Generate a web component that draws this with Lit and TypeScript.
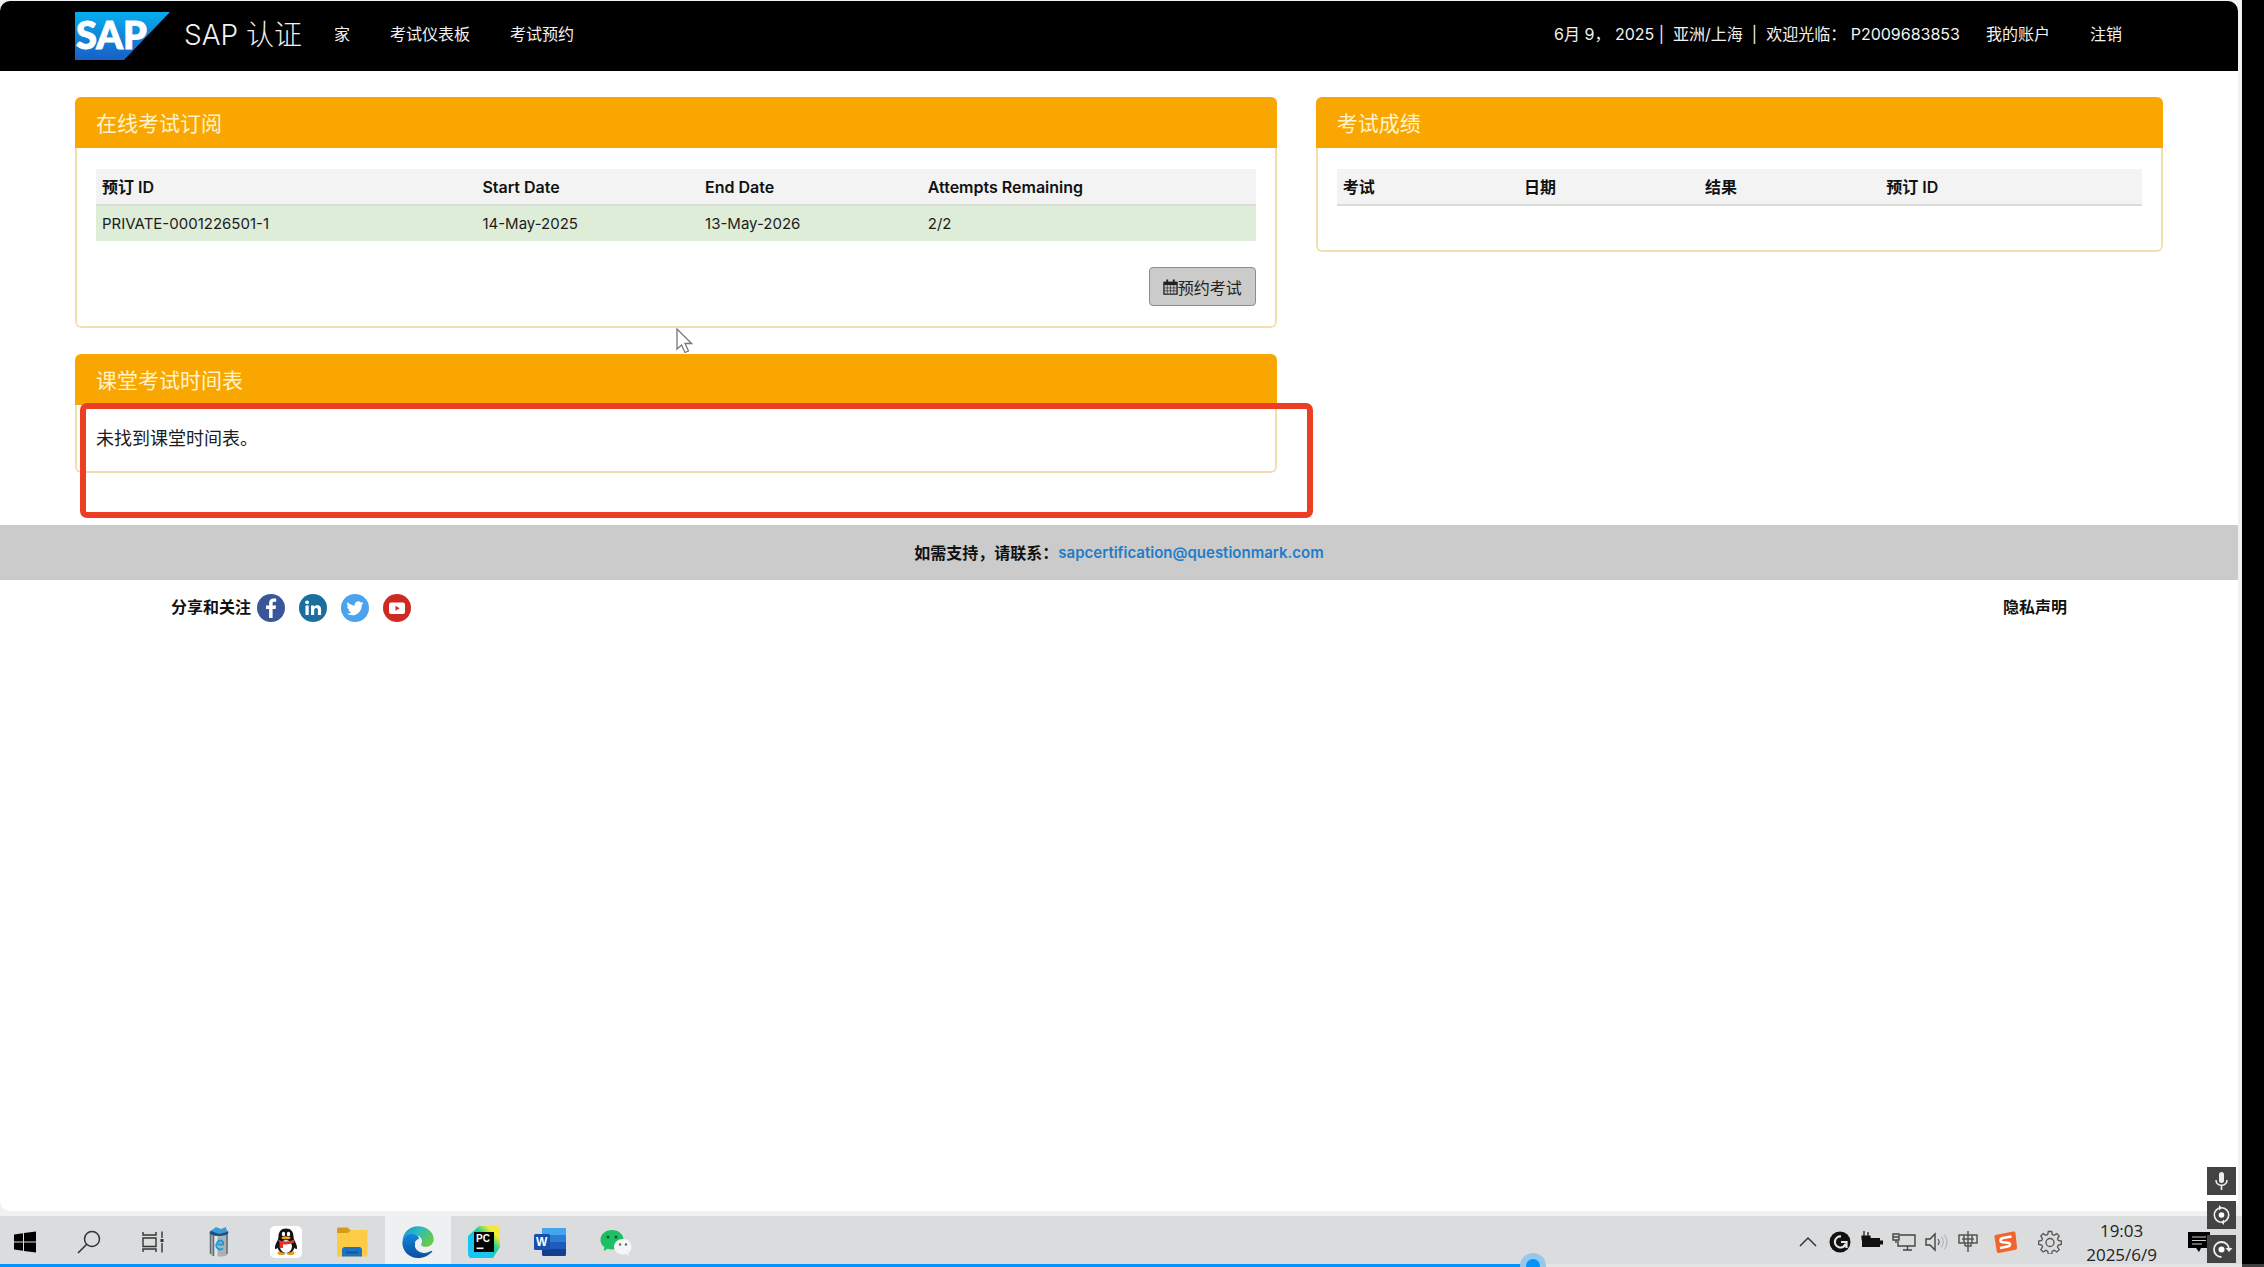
import { LitElement, html, css, svg } from "lit";
import { customElement } from "lit/decorators.js";

const logo = html`<svg class="logo" viewBox="0 0 95 48" role="img" aria-label="SAP">
  <defs><linearGradient id="sapg" x1="0" y1="0" x2="0" y2="1"><stop offset="0" stop-color="#06aeee" /><stop offset="1" stop-color="#1a5fc4" /></linearGradient></defs>
  <path d="M0 0H95L49 48H0Z" fill="url(#sapg)" />
  <text class="logo-text" x="1" y="37">SAP</text>
</svg>`;

const calendar = html`<svg class="cal" viewBox="0 0 16 16" aria-hidden="true">
  <path d="M1 3h14v12.5H1z" fill="none" stroke="#222" stroke-width="1.4" />
  <path d="M1 2.5h14V6H1z" fill="#222" />
  <path d="M4.5 0v4M11.5 0v4" stroke="#222" stroke-width="2" />
  <path d="M4.5 6v9M8 6v9M11.5 6v9M1 9h14M1 12h14" stroke="#333" stroke-width=".8" />
</svg>`;

const socials = [
  { name: "Facebook", color: "#3a569b", mark: svg`<path d="M15.6 24v-9h3l.5-3.500h-3.500V9.400c0-1 .4-1.700 1.800-1.700h1.800V4.600c-.4 0-1.400-.2-2.600-.2-2.800 0-4.500 1.600-4.500 4.600v2.500H9V15h3.100v9z" fill="#fff"/>` },
  { name: "LinkedIn", color: "#1b6f9f", mark: svg`<path d="M6.500 11.500h3.200V21H6.500zM12 11.500h3v1.400c.6-1 1.700-1.700 3.200-1.700 3 0 3.900 1.900 3.900 4.700V21h-3.200v-4.700c0-1.400-.3-2.400-1.700-2.400s-2 1-2 2.400V21H12z" fill="#fff"/><circle cx="8.100" cy="8.300" r="1.900" fill="#fff"/>` },
  { name: "Twitter", color: "#4ba3ee", mark: svg`<path d="M22.500 9c-.6.300-1.300.5-2 .6.7-.4 1.300-1.100 1.500-1.900-.7.400-1.400.7-2.200.8a3.500 3.500 0 0 0-6 3.200c-2.900-.1-5.400-1.500-7.200-3.600-1 1.700-.4 3.600 1.100 4.600-.6 0-1.100-.2-1.600-.4 0 1.700 1.200 3.100 2.800 3.400-.5.100-1 .2-1.500.1.400 1.400 1.700 2.400 3.200 2.400A7 7 0 0 1 5.500 19.600c8 4.600 15.400-.8 15.300-8.900.7-.4 1.300-1 1.700-1.700z" fill="#fff"/>` },
  { name: "YouTube", color: "#cf2a22", mark: svg`<rect x="6" y="8.500" width="16" height="11.500" rx="2" fill="#fff"/><path d="M12.500 11.800v5l4.200-2.500z" fill="#cf2a22"/>` },
];

const apps = [
  { name: "开始", art: svg`<path d="M5 8.600l9-1.300v8.200H5zM15 7.100L27 5.500v10H15zM5 16.500h9v8.200l-9-1.300zM15 16.500h12v10l-12-1.600z" fill="#000"/>` },
  { name: "搜索", art: svg`<circle cx="19" cy="13" r="7.500" fill="none" stroke="#333" stroke-width="1.500"/><path d="M13.500 18.500L5 27" stroke="#333" stroke-width="1.600"/>` },
  { name: "任务视图", art: svg`<path d="M6 6v3h13V6M6 26v-3h13v3M6 12h13v8.500H6zM25 5.500V12M25 17v9.500" fill="none" stroke="#333" stroke-width="1.400"/><path d="M23.500 13h3v3h-3z" fill="#333"/>` },
  { name: "垃圾清理", art: svg`<path d="M7 7h18l-1 22c0 2-16 2-16 0z" fill="#aab2b8"/><path d="M7.500 7v21M10.500 9v21M24 8v20" stroke="#5f6d76" stroke-width="1.500"/><path d="M13 9v22" stroke="#dfe5e8" stroke-width="3"/><ellipse cx="16" cy="6.500" rx="9.500" ry="3.500" fill="#1e4f7c"/><path d="M8 5l5-4 5 2 5-2 1 5-8 2z" fill="#3d9bd9"/><path d="M20 22.500c-5 3-8-2-6-5.500 2-4 7-2.500 6 1.500h-5" fill="none" stroke="#199cd8" stroke-width="2"/>` },
  { name: "QQ", art: svg`<rect width="32" height="32" rx="5" fill="#fff"/><ellipse cx="11.500" cy="27" rx="4" ry="2" fill="#e79a22"/><ellipse cx="20.500" cy="27" rx="4" ry="2" fill="#e79a22"/><path d="M16 2.500c-5 0-7.500 3.500-7.500 8 0 4-3.500 7-3.500 11 0 2 1 2 2.500 0 1 4 4 5.500 8.500 5.500s7.500-1.500 8.500-5.500c1.500 2 2.500 2 2.500 0 0-4-3.500-7-3.500-11 0-4.500-2.500-8-7.500-8z" fill="#111"/><ellipse cx="16" cy="20.500" rx="6" ry="6.500" fill="#fff"/><ellipse cx="13.500" cy="8" rx="1.700" ry="2.300" fill="#fff"/><ellipse cx="18.500" cy="8" rx="1.700" ry="2.300" fill="#fff"/><ellipse cx="16" cy="11.700" rx="4.500" ry="1.500" fill="#f1a21c"/><path d="M8 13.500c5 2.500 11 2.500 16 0v3c-4 2-8 2.300-11 1.700V22h-3.500v-5.500z" fill="#e33125"/>` },
  { name: "文件资源管理器", art: svg`<path d="M1 3c0-1 .5-1.500 1.500-1.500h9L14 4H31v4H1z" fill="#d79a17"/><path d="M1 7h11l3-3h15c1 0 1.500.5 1.500 1.500V29c0 1-.5 1.500-1.500 1.500H2.500C1.500 30.500 1 30 1 29z" fill="#fdcb45"/><path d="M6 30.500V24c0-2 1-3 3-3h14c2 0 3 1 3 3v6.500z" fill="#1c73c4"/><path d="M10 25.500h12v2H10z" fill="#125496"/>` },
  { name: "Edge", active: true, art: svg`<defs><linearGradient id="e1" x1="0" y1="0" x2="1" y2=".5"><stop offset="0" stop-color="#1593d8"/><stop offset=".55" stop-color="#32bdb9"/><stop offset="1" stop-color="#65c94b"/></linearGradient><linearGradient id="e2" x1="0" y1="0" x2="0" y2="1"><stop offset="0" stop-color="#1388dc"/><stop offset="1" stop-color="#0e4d9e"/></linearGradient></defs><path d="M.5 15C1 6 8 .3 16 .3c9 0 15.700 6 15.700 13 0 5-4 7.500-8 7.500-3 0-5.700-1-4.200-3.200C22 13 17 8.500 11.500 9 6 9.400 2 12 .5 15z" fill="url(#e1)"/><path d="M.4 16C2 8.500 8 7.500 11 8c4 .5 6 2.500 6 5-3 .5-5 3.500-4.500 7 .7 5 6 8 11.500 7.500 2 0 4-1 6-2C27 29.500 22 32 16 32 7 32 0 25 .4 16z" fill="url(#e2)"/><path d="M12.500 17c-2 6 4 11.500 10.500 10.700 2.500-.2 5-1.200 7-2.400" fill="none" stroke="#145fb2" stroke-width="1.500"/>` },
  { name: "PyCharm", art: svg`<defs><linearGradient id="p1" x1="0" y1="1" x2="1" y2="0"><stop offset=".35" stop-color="#16c5f2"/><stop offset=".6" stop-color="#27cf8d"/><stop offset=".8" stop-color="#f3ea38"/></linearGradient></defs><path d="M0 10L11 0h21v21l-7 11H2L0 29z" fill="url(#p1)"/><rect x="6" y="6" width="20" height="20" fill="#000"/><text class="pc" x="8" y="16">PC</text><path d="M8.500 21.500h7v1.600h-7z" fill="#fff"/>` },
  { name: "Word", art: svg`<rect x="8" y="2" width="24" height="28" rx="2" fill="#1d5cbb"/><path d="M10 2h20c1.500 0 2 .7 2 2v5H8V4c0-1.300.7-2 2-2z" fill="#42a5ee"/><path d="M8 9h24v7H8z" fill="#2b7cd4"/><path d="M8 23h24v5c0 1.500-.7 2-2 2H10c-1.500 0-2-.7-2-2z" fill="#12408f"/><rect x="0" y="8" width="16" height="16" rx="1.500" fill="#1750ad"/><text class="wd" x="2" y="20">W</text>` },
  { name: "微信", art: svg`<path d="M12 4C5 4 .5 8.500.5 14c0 3 1.500 5.500 4 7.300L3.500 25l4.200-2.200c1.400.4 2.800.6 4.300.6 7 0 11.500-4.400 11.500-9.600S19 4 12 4z" fill="#1cbf62"/><circle cx="8" cy="11" r="1.500" fill="#0d5d31"/><circle cx="16" cy="11" r="1.500" fill="#0d5d31"/><path d="M23 13c-5 0-9 3.500-9 7.800s4 7.700 9 7.700c1 0 2-.1 2.900-.4l3.100 1.700-.7-2.900c2-1.400 3.200-3.600 3.200-6.100 0-4.300-3.500-7.800-8.500-7.800z" fill="#f4f6f5"/><circle cx="20" cy="18.500" r="1.200" fill="#666"/><circle cx="26" cy="18.500" r="1.200" fill="#666"/>` },
];

const tray = [
  { name: "显示隐藏的图标", art: svg`<path d="M4 16l8-8 8 8" fill="none" stroke="#333" stroke-width="1.500"/>` },
  { name: "Logitech G", art: svg`<circle cx="12" cy="12" r="10.500" fill="#111"/><path d="M13 6.500a5.500 5.500 0 1 0 4.500 7.500M13 12h5.500v6" fill="none" stroke="#e6e6e6" stroke-width="2.200"/>` },
  { name: "电池", art: svg`<path d="M2 8h18v2.500h3v4h-3V17H2z" fill="#111"/><path d="M4 1v5M8 2v4M2 6h8v2c0 3-2 4-4 4s-4-1-4-4z" fill="#111" stroke="#111" stroke-width="1.200"/>` },
  { name: "网络", art: svg`<path d="M8 5h15v11H6v-5M11 20h9M15.500 16v4M1 4h6v6H1zM4 10v3M1 7h6" fill="none" stroke="#444" stroke-width="1.400"/>` },
  { name: "音量", art: svg`<path d="M2 9h4l5-5v16l-5-5H2z" fill="none" stroke="#444" stroke-width="1.400"/><path d="M14 9c1.500 2 1.500 4 0 6" fill="none" stroke="#555" stroke-width="1.200"/><path d="M17 6.500c3 3.500 3 7.500 0 11M20 4.500c4 4.500 4 10.500 0 15" fill="none" stroke="#aaa" stroke-width="1"/>` },
  { name: "输入法", art: svg`<path d="M3 5h18v8H3zM8 5v8M16 5v8M12 1v21M6 9h12M9 16h6v-3M9 13v3" fill="none" stroke="#555" stroke-width="1.500"/>` },
];

const sogou = html`<svg class="i24" viewBox="0 0 24 24" role="img" aria-label="搜狗输入法"><path d="M1.500 5L19 1.500c1.500-.3 2.300.4 2.500 1.500L23 17.500c.1 1.300-.5 2-1.500 2.200L5 23c-1.300.2-2-.4-2.200-1.500L.5 7C.3 6 .7 5.200 1.500 5z" fill="#f0652b"/><path d="M17.500 6.500L9 8c-3 .6-3.500 3.600-.5 4.200l5.500.6c3 .6 2.500 3.200-.5 3.800L6 18" fill="none" stroke="#fff" stroke-width="2.600"/></svg>`;
const gear = html`<svg class="i24" viewBox="0 0 24 24" role="img" aria-label="设置"><path d="M10.300 1.500h3.400l.6 3 1.900.8 2.600-1.700 2.400 2.400-1.700 2.600.8 1.900 3 .6v3.400l-3 .6-.8 1.900 1.700 2.600-2.400 2.400-2.600-1.700-1.900.8-.6 3h-3.400l-.6-3-1.900-.8L5.200 22l-2.400-2.400L4.500 17l-.8-1.900-3-.6v-3.400l3-.6.8-1.900L2.800 6l2.400-2.400 2.600 1.700 1.900-.8z" fill="none" stroke="#555" stroke-width="1.300"/><circle cx="12" cy="12.500" r="4" fill="none" stroke="#555" stroke-width="1.300"/></svg>`;
const notice = html`<svg class="i24" viewBox="0 0 24 24" role="img" aria-label="通知"><path d="M1 2h22v16h-9l-2 4-3-4H1z" fill="#000"/><path d="M5 7h14M5 10.500h14M5 14h10" stroke="#ccc" stroke-width="1.200"/></svg>`;

const tools = [
  { name: "麦克风", art: svg`<rect x="12" y="5" width="5" height="11" rx="2.500" fill="#eee"/><path d="M9 13c0 7 11 7 11 0M14.500 18.500V23" fill="none" stroke="#eee" stroke-width="1.600"/>` },
  { name: "录制", art: svg`<circle cx="14.500" cy="14" r="2.800" fill="#fff"/><circle cx="14.500" cy="14" r="7.200" fill="none" stroke="#eee" stroke-width="1.600"/><path d="M12 4l3 2.800-3 2.700zM17 24l-3-2.800 3-2.700z" fill="#eee"/>` },
  { name: "旋转", art: svg`<circle cx="14.500" cy="14.500" r="3" fill="#fff"/><path d="M14.500 22A7.500 7.500 0 1 1 22 14.500" fill="none" stroke="#eee" stroke-width="1.800"/><path d="M18.500 13h7L22 17z" fill="#eee"/>` },
];

@customElement("app-root")
export class AppRoot extends LitElement {
  static styles = css`
    :host { display: block; font-family: Inter, "Noto Sans CJK SC", sans-serif; font-size: 15px; line-height: 24px; color: #1c1c1c; }
    * { box-sizing: border-box; }
    a { color: inherit; text-decoration: none; }
    svg { display: block; flex: none; }
    .stage { min-height: 100vh; display: flex; flex-direction: column; background: #000; padding-right: 22px; position: relative; overflow: hidden; }
    .browser { flex: 1; display: flex; background: #eff1f2; padding: 1px 4px 5px 0; }
    .page { flex: 1; display: flex; flex-direction: column; background: #fff; border-radius: 10px; overflow: hidden; }
    .top { height: 70px; padding: 0 116px 0 75px; background: #000; color: #f2f2f2; display: flex; align-items: center; justify-content: space-between; }
    .side { display: flex; align-items: center; padding-bottom: 4px; font-size: 16px; }
    .logo { width: 95px; height: 48px; margin-right: 14px; margin-top: 4px; }
    .logo-text { font: 900 38px Lato, "Liberation Sans", sans-serif; fill: #fff; stroke: #fff; stroke-width: 1px; }
    .brand { font-size: 28px; line-height: 32px; font-weight: 300; margin-right: 32px; padding-top: 2px; }
    .menu { display: flex; gap: 40px; }
    .info { white-space: pre; margin-right: 26px; }
    .main { display: grid; grid-template-columns: repeat(12, minmax(0, 1fr)); gap: 26px 39px; padding: 26px 75px 52px; align-items: start; }
    .left { grid-column: span 7; display: grid; gap: 26px; position: relative; }
    .right { grid-column: span 5; }
    .card { border-radius: 6px; overflow: hidden; }
    .card h2 { margin: 0; padding: 0 21px; height: 51px; line-height: 54px; font-size: 21px; font-weight: 400; color: #fff3cf; background: #f9a700; }
    .body { padding: 21px 19px 20px; border: 2px solid #f3dfae; border-top: 0; border-radius: 0 0 6px 6px; }
    .short { padding-bottom: 44px; }
    .note { margin: 0; padding-top: 1px; font-size: 18px; }
    table { width: 100%; border-collapse: collapse; table-layout: fixed; }
    th, td { text-align: left; padding: 5px 6px; height: 36px; }
    th { background: #f3f3f3; font-size: 16px; font-weight: 600; border-bottom: 2px solid #d9dcd8; color: #111; }
    td { background: #deedd8; }
    .c1 { width: 32.8%; } .c2, .c3 { width: 19.2%; }
    .r { width: 22.5%; }
    .actions { display: flex; justify-content: flex-end; padding-top: 26px; }
    .book { display: flex; align-items: center; height: 39px; padding: 0 13px; border: 1px solid #8d8d8d; border-radius: 4px; background: #cbcbcb; font-family: inherit; font-size: 16px; color: #222; }
    .cal { width: 15px; height: 16px; }
    .marker { position: absolute; left: 5px; right: -36px; bottom: -45px; height: 115px; border: 6px solid #ed3e24; border-radius: 7px; pointer-events: none; }
    .cursor { position: absolute; left: 50%; top: 231px; width: 17px; height: 26px; }
    .support { height: 55px; background: #cbcbcb; display: flex; align-items: center; justify-content: center; font-size: 16px; font-weight: 700; color: #111; }
    .support a { color: #1f7cc9; font-size: 15px; font-weight: 600; }
    .foot { display: flex; align-items: center; justify-content: space-between; padding: 11px 171px; font-size: 16px; font-weight: 700; color: #111; }
    .share { display: flex; align-items: center; }
    .links { display: flex; gap: 14px; padding: 3px 6px 0; }
    .links svg { width: 28px; height: 28px; }
    .taskbar { height: 51px; background: #dbdcdd; display: flex; justify-content: space-between; }
    .apps, .tray { display: flex; align-items: center; }
    .app { width: 66px; height: 51px; border: 0; padding: 0; background: none; display: flex; align-items: center; justify-content: center; }
    .app:first-child { width: 57px; padding-right: 7px; }
    .app:nth-child(2), .app:nth-child(3) { width: 64px; }
    .app:nth-child(4) { width: 68px; }
    .active { background: #eff0f1; }
    .app svg { width: 32px; height: 32px; }
    .tray { padding-right: 31px; color: #222; }
    .trays { display: flex; gap: 8px; }
    .i24 { width: 24px; height: 24px; }
    .extras { display: flex; gap: 20px; margin: 0 24px 0 14px; }
    .clock { font-family: "Open Sans", "Noto Sans", sans-serif; font-size: 17px; line-height: 24px; text-align: center; margin-right: 30px; padding-top: 2px; }
    .pc { font: bold 10px "Liberation Sans", sans-serif; fill: #fff; }
    .wd { font: bold 12px "Liberation Sans", sans-serif; fill: #fff; }
    .tools { position: absolute; right: 28px; bottom: 4px; display: grid; gap: 6px; }
    .tool { width: 29px; height: 28px; padding: 0; border: 0; background: #434343; }
    .tool svg { width: 29px; height: 28px; }
    .player { position: absolute; left: 0; right: 0; bottom: 0; height: 3px; background: rgba(255, 255, 255, 0.25); }
    .played { height: 3px; background: #0094ff; position: relative; }
    .knob { position: absolute; right: -13px; top: -11px; width: 26px; height: 26px; border-radius: 50%; border: 6px solid #97c7ea; background: #0094ff; }
  `;

  render() {
    return html`<div class="stage">
      <div class="browser"><div class="page">
        <header class="top">
          <div class="side">${logo}<span class="brand">SAP 认证</span>
            <nav class="menu"><a href="#home">家</a><a href="#dashboard">考试仪表板</a><a href="#booking">考试预约</a></nav></div>
          <div class="side"><span class="info">6月 9， 2025 |  亚洲/上海  |  欢迎光临： P2009683853</span>
            <nav class="menu"><a href="#account">我的账户</a><a href="#logout">注销</a></nav></div>
        </header>
        <main class="main">
          <div class="left">
            <section class="card"><h2>在线考试订阅</h2><div class="body">
              <table><thead><tr><th class="c1">预订 ID</th><th class="c2">Start Date</th><th class="c3">End Date</th><th>Attempts Remaining</th></tr></thead>
                <tbody><tr><td>PRIVATE-0001226501-1</td><td>14-May-2025</td><td>13-May-2026</td><td>2/2</td></tr></tbody></table>
              <div class="actions"><button class="book">${calendar}预约考试</button></div>
            </div></section>
            <section class="card"><h2>课堂考试时间表</h2><div class="body"><p class="note">未找到课堂时间表。</p></div></section>
            <div class="marker"></div>
            <svg class="cursor" viewBox="0 0 17 26"><path d="M1 1v20l4.500-4 3.500 7.500 3.500-1.500L9 15.500h6.500z" fill="#fff" stroke="#777" stroke-width="1.300" /></svg>
          </div>
          <section class="card right"><h2>考试成绩</h2><div class="body short">
            <table><thead><tr><th class="r">考试</th><th class="r">日期</th><th class="r">结果</th><th>预订 ID</th></tr></thead></table>
          </div></section>
        </main>
        <div class="support"><span>如需支持，请联系：</span><a href="mailto:sapcertification@questionmark.com">sapcertification@questionmark.com</a></div>
        <footer class="foot"><div class="share">分享和关注<div class="links">${socials.map((s) => html`<a href="#${s.name}" aria-label=${s.name}><svg viewBox="0 0 28 28"><circle cx="14" cy="14" r="14" fill=${s.color} />${s.mark}</svg></a>`)}</div></div>
          <a href="#privacy">隐私声明</a></footer>
      </div></div>
      <div class="taskbar">
        <div class="apps">${apps.map((a) => html`<button class="app ${a.active ? "active" : ""}" aria-label=${a.name}><svg viewBox="0 0 32 32">${a.art}</svg></button>`)}</div>
        <div class="tray"><div class="trays">${tray.map((t) => html`<svg class="i24" viewBox="0 0 24 24" role="img" aria-label=${t.name}>${t.art}</svg>`)}</div>
          <div class="extras">${sogou}${gear}</div>
          <div class="clock">19:03<br />2025/6/9</div>${notice}</div>
      </div>
      <div class="tools">${tools.map((t) => html`<button class="tool" aria-label=${t.name}><svg viewBox="0 0 29 28">${t.art}</svg></button>`)}</div>
      <div class="player"><div class="played" style="width:67.7%"><div class="knob"></div></div></div>
    </div>`;
  }
}
